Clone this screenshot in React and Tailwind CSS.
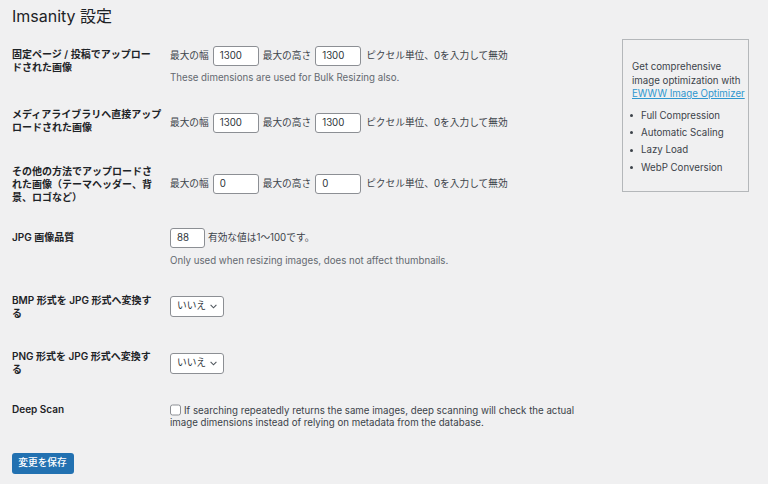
import React from 'react';

const FONT = { fontFamily: '"Inter", "Noto Sans CJK JP", sans-serif' };

function Field({ value, w = 'w-[46px]' }) {
  return (
    <div className={`${w} h-[20px] flex items-center rounded-[3px] border border-[#8c8f94] bg-white pl-[6px] text-[9.7px] text-[#2c3338]`}>
      {value}
    </div>
  );
}

function SizeLine({ a, b }) {
  return (
    <div className="flex items-center gap-[4px] text-[9.7px] text-[#3c434a]">
      <span>最大の幅</span>
      <Field value={a} />
      <span>最大の高さ</span>
      <Field value={b} />
      <span className="ml-[1px]">ピクセル単位、0を入力して無効</span>
    </div>
  );
}

function Choice() {
  return (
    <div className="flex h-[21px] w-[54px] items-center justify-between rounded-[3px] border border-[#8c8f94] bg-white pl-[6px] pr-[6px] text-[9.7px] text-[#2c3338]">
      <span>いいえ</span>
      <svg width="7" height="5" viewBox="0 0 7 5" fill="none">
        <path d="M0.6 0.9 L3.5 3.8 L6.4 0.9" stroke="#50575e" strokeWidth="1.1" />
      </svg>
    </div>
  );
}

function Row({ h, lp, fp, label, children }) {
  return (
    <div className="flex" style={{ height: h }}>
      <div className="w-[158px] shrink-0 text-[10px] font-semibold leading-[13px] text-[#1d2327]" style={{ paddingTop: lp }}>
        {label}
      </div>
      <div className="flex-1" style={{ paddingTop: fp }}>
        {children}
      </div>
    </div>
  );
}

export default function App() {
  return (
    <div className="min-h-screen bg-[#f0f0f1]" style={FONT}>
      <div className="flex">
        <main className="w-[610px] shrink-0 pl-[12px]">
          <h1 className="pt-[5px] text-[16px] leading-[23px] text-[#1d2327]">Imsanity 設定</h1>

          <div className="mt-[6px]">
            <Row h={60} lp={13.5} fp={12} label={<>固定ページ / 投稿でアップロー<br />ドされた画像</>}>
              <SizeLine a="1300" b="1300" />
              <p className="mt-[5px] text-[9.7px] leading-[13px] text-[#646970]">
                These dimensions are used for Bulk Resizing also.
              </p>
            </Row>

            <Row h={56} lp={14} fp={19} label={<>メディアライブラリへ直接アップ<br />ロードされた画像</>}>
              <SizeLine a="1300" b="1300" />
            </Row>

            <Row h={69} lp={14.5} fp={24} label={<>その他の方法でアップロードさ<br />れた画像（テーマヘッダー、背<br />景、ロゴなど）</>}>
              <SizeLine a="0" b="0" />
            </Row>

            <Row h={59} lp={12.2} fp={9.3} label="JPG 画像品質">
              <div className="flex items-center gap-[3px] text-[9.7px] text-[#3c434a]">
                <Field value="88" w="w-[35px]" />
                <span>有効な値は1〜100です。</span>
              </div>
              <p className="mt-[5.5px] text-[9.7px] leading-[13px] text-[#646970]">
                Only used when resizing images, does not affect thumbnails.
              </p>
            </Row>

            <Row h={56} lp={15.5} fp={17.7} label={<>BMP 形式を JPG 形式へ変換す<br />る</>}>
              <Choice />
            </Row>

            <Row h={56} lp={16.2} fp={18.7} label={<>PNG 形式を JPG 形式へ変換す<br />る</>}>
              <Choice />
            </Row>

            <Row h={48} lp={12.5} fp={12.5} label="Deep Scan">
              <div className="text-[9.7px] leading-[12.5px] text-[#3c434a] whitespace-nowrap">
                <span className="mr-[3px] inline-block h-[11px] w-[11px] translate-y-[1.5px] rounded-[2.5px] border border-[#8c8f94] bg-white align-baseline" />
                If searching repeatedly returns the same images, deep scanning will check the actual
                <br />
                image dimensions instead of relying on metadata from the database.
              </div>
            </Row>
          </div>

          <button className="mt-[15px] -ml-[0.5px] h-[21px] w-[62px] rounded-[3px] bg-[#2271b1] text-[9.7px] font-medium text-white">
            変更を保存
          </button>
        </main>

        <aside className="mt-[39px] ml-[12px] h-[153px] w-[127px] shrink-0 border border-[#b4b7ba] pl-[9px] pt-[20px] text-[9.7px] text-[#3c434a]">
          <p className="leading-[13.6px]">
            Get comprehensive
            <br />
            image optimization with
            <br />
            <a className="text-[#2f97cf] underline">EWWW Image Optimizer</a>
          </p>
          <ul className="mt-[8px] space-y-[4px] leading-[13.3px]">
            {['Full Compression', 'Automatic Scaling', 'Lazy Load', 'WebP Conversion'].map((t) => (
              <li key={t} className="flex items-center">
                <span className="ml-[-2px] mr-[8px] h-[3px] w-[3px] rounded-full bg-[#3c434a]" />
                {t}
              </li>
            ))}
          </ul>
        </aside>
      </div>
    </div>
  );
}
